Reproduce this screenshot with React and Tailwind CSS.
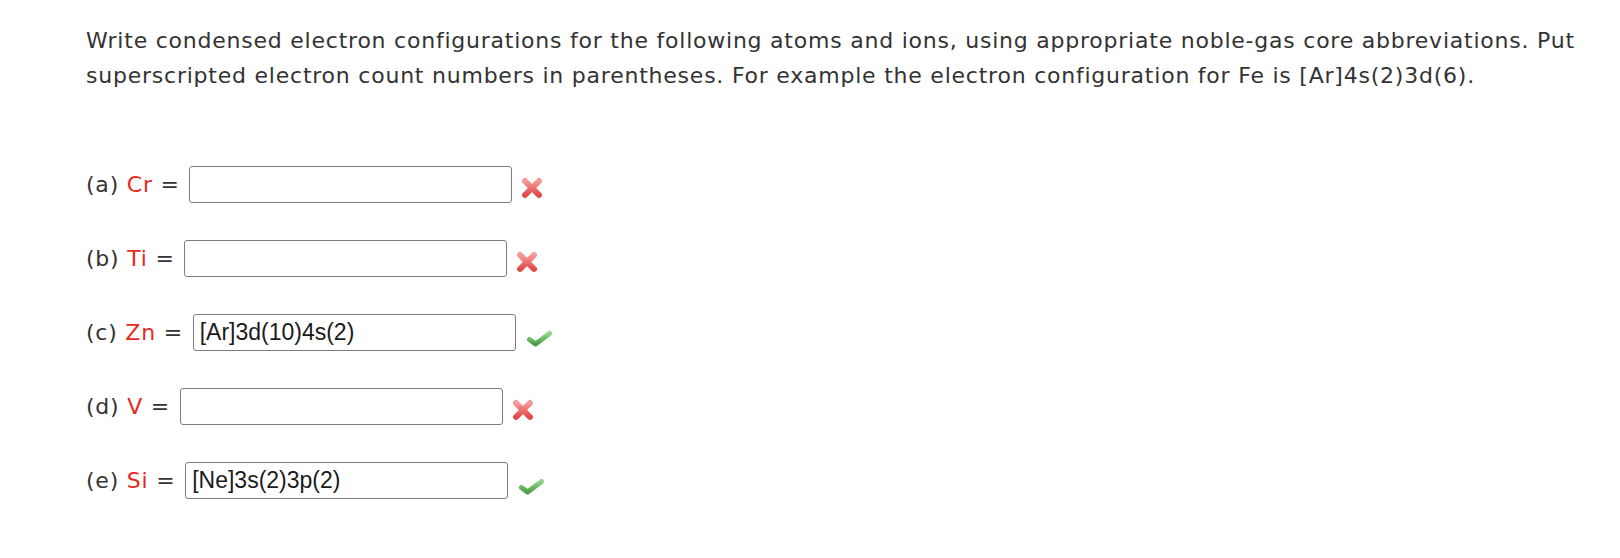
import React from "react";

function Cross() {
  return (
    <svg width="22" height="22" viewBox="0 0 22 22" className="shrink-0 block">
      <defs>
        <linearGradient id="rg" x1="0" y1="0" x2="0" y2="1">
          <stop offset="0" stopColor="#f59a9a" />
          <stop offset="1" stopColor="#e04a48" />
        </linearGradient>
      </defs>
      <g stroke="url(#rg)" strokeWidth="6" strokeLinecap="round">
        <line x1="4" y1="4" x2="18" y2="18" />
        <line x1="18" y1="4" x2="4" y2="18" />
      </g>
    </svg>
  );
}

function Check() {
  return (
    <svg width="27" height="17" viewBox="0 0 27 17" className="shrink-0 block">
      <defs>
        <linearGradient id="gg" x1="0" y1="0" x2="0" y2="1">
          <stop offset="0" stopColor="#93d58d" />
          <stop offset="1" stopColor="#4c9e46" />
        </linearGradient>
      </defs>
      <polyline
        points="3.5,9.5 9.5,14 23.5,3.5"
        fill="none"
        stroke="url(#gg)"
        strokeWidth="5"
        strokeLinecap="round"
        strokeLinejoin="round"
      />
    </svg>
  );
}

function Row({ tag, el, value, ok }) {
  return (
    <div className="flex items-center h-[37px]">
      <span className="whitespace-pre text-[#333]">({tag}) </span>
      <span className="whitespace-pre text-[#e8281c]">{el}</span>
      <span className="whitespace-pre text-[#333]"> = </span>
      <div
        className="ml-[2px] w-[323px] h-[37px] shrink-0 border border-[#7d7d7d] rounded-[3px] bg-white flex items-center pl-[6px] text-[23px] text-[#1a1a1a] tracking-normal"
        style={{ fontFamily: '"Liberation Sans", Arial, sans-serif' }}
      >
        {value}
      </div>
      {ok ? (
        <div className="ml-[10px] mt-[12px]">
          <Check />
        </div>
      ) : (
        <div className="ml-[9px] mt-[6px]">
          <Cross />
        </div>
      )}
    </div>
  );
}

export default function App() {
  return (
    <div
      className="w-[1620px] h-[558px] bg-white text-[#333] text-[22px] tracking-[0.77px] pl-[86px] pt-[23px]"
      style={{ fontFamily: '"DejaVu Sans", Verdana, sans-serif' }}
    >
      <p className="leading-[35px] w-[1510px]">
        Write condensed electron configurations for the following atoms and ions, using appropriate noble-gas core abbreviations. Put superscripted electron count numbers in parentheses. For example the electron configuration for Fe is [Ar]4s(2)3d(6).
      </p>
      <div className="mt-[73px] flex flex-col gap-[37px]">
        <Row tag="a" el="Cr" value="" ok={false} />
        <Row tag="b" el="Ti" value="" ok={false} />
        <Row tag="c" el="Zn" value="[Ar]3d(10)4s(2)" ok={true} />
        <Row tag="d" el="V" value="" ok={false} />
        <Row tag="e" el="Si" value="[Ne]3s(2)3p(2)" ok={true} />
      </div>
    </div>
  );
}
